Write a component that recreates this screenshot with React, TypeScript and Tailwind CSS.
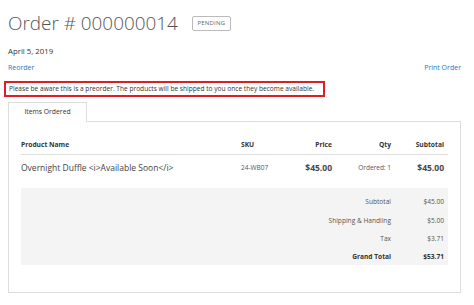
export default function App() {
  const font = { fontFamily: '"Open Sans", sans-serif' };
  return (
    <div className="w-[474px] h-[305px] bg-white text-[#333] overflow-hidden" style={font}>
      <div className="pl-2 pr-[13px] pt-[11px]">
        <div className="flex items-center h-[24px]">
          <h1 className="text-[18.9px] leading-[24px] font-light text-[#555]">Order # 000000014</h1>
          <span className="ml-[14px] border border-[#bbb] rounded-[2px] w-[39px] h-[15px] flex items-center justify-center text-[6px] uppercase text-[#666] tracking-[0.2px]">Pending</span>
        </div>
        <div className="mt-[9.5px] text-[7.8px] leading-[12px] text-[#333]">April 5, 2019</div>
        <div className="mt-[6.5px] flex justify-between text-[7px] leading-[10px] text-[#1979c3]">
          <span>Reorder</span>
          <span>Print Order</span>
        </div>
      </div>
      <div className="ml-[4px] mt-[8px] w-[321px] h-[16px] border-2 border-[#e01c24] flex items-center pl-[3px] text-[6.6px] text-[#333] whitespace-nowrap">
        Please be aware this is a preorder. The products will be shipped to you once they become available.
      </div>
      <div className="pl-2 pr-[13px] mt-[5px]">
        <div className="flex">
          <div className="w-[79px] h-[20px] border border-[#ddd] border-b-0 bg-white flex items-center justify-center text-[6.8px] text-[#333] relative z-10 -mb-px">Items Ordered</div>
        </div>
        <div className="border border-[#ddd] h-[172px] px-[12px] pt-[19px]">
          <div className="flex items-center text-[6.7px] font-bold text-[#333] h-[14px] pb-[4px] border-b border-[#ddd]">
            <div className="w-[220px]">Product Name</div>
            <div className="w-[50px]">SKU</div>
            <div className="w-[41px] text-right">Price</div>
            <div className="w-[59px] text-right">Qty</div>
            <div className="w-[53px] text-right">Subtotal</div>
          </div>
          <div className="flex items-center h-[26px]">
            <div className="w-[220px] text-[8.5px] text-[#444]">Overnight Duffle &lt;i&gt;Available Soon&lt;/i&gt;</div>
            <div className="w-[50px] text-[6.5px] text-[#555]">24-WB07</div>
            <div className="w-[41px] text-right text-[8.5px] font-bold text-[#444]">$45.00</div>
            <div className="w-[59px] text-right text-[6.5px] text-[#555]">Ordered: 1</div>
            <div className="w-[53px] text-right text-[8.5px] font-bold text-[#444]">$45.00</div>
          </div>
          <div className="mt-[7px] bg-[#f4f4f4] h-[77px] pt-[5px] text-[6.6px] text-[#555]">
            {[
              ["Subtotal", "$45.00"],
              ["Shipping & Handling", "$5.00"],
              ["Tax", "$3.71"],
            ].map(([l, v]) => (
              <div key={l} className="flex h-[18.4px] items-center">
                <div className="w-[370px] text-right">{l}</div>
                <div className="w-[53px] text-right">{v}</div>
              </div>
            ))}
            <div className="flex h-[18.4px] items-center font-bold text-[#333] text-[6.6px]">
              <div className="w-[370px] text-right">Grand Total</div>
              <div className="w-[53px] text-right">$53.71</div>
            </div>
          </div>
        </div>
      </div>
    </div>
  );
}
